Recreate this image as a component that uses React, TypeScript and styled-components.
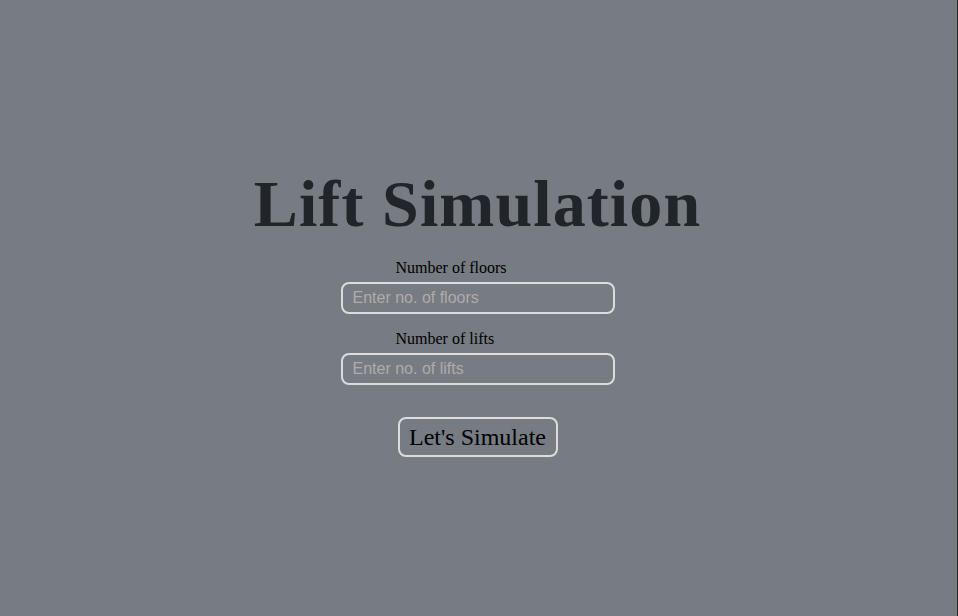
import React from "react";
import styled, { createGlobalStyle } from "styled-components";

const Global = createGlobalStyle`
  html, body { margin: 0; padding: 0; }
  body { background: #777b82; font-family: "Liberation Serif", "Times New Roman", serif; }
`;

const Page = styled.main`
  box-sizing: border-box;
  height: 616px;
  width: 958px;
  border-right: 1px solid #2a2c30;
  padding: 164px 2px 0 0;
  display: flex;
  flex-direction: column;
  align-items: center;
`;

const Title = styled.h1`
  margin: 0 0 14px;
  font-family: "Liberation Serif", "Times New Roman", serif;
  font-size: 66px;
  line-height: 80px;
  font-weight: 700;
  letter-spacing: 1.1px;
  color: #212529;
`;

const Form = styled.form`
  display: flex;
  flex-direction: column;
  align-items: center;
`;

const Field = styled.div`
  width: 274px;
  display: flex;
  flex-direction: column;
  margin-bottom: 15px;
`;

const Label = styled.label`
  padding-left: 55px;
  font-size: 16px;
  line-height: 19px;
  color: #000;
  margin-bottom: 5px;
`;

const Input = styled.input`
  box-sizing: border-box;
  width: 274px;
  height: 32px;
  border: 2px solid #dcdcdc;
  border-radius: 8px;
  background: transparent;
  padding: 0 10px;
  font-family: "Liberation Sans", Arial, sans-serif;
  font-size: 16px;
  color: #000;
  outline: none;
  &::placeholder { color: #b0abab; }
`;

const Button = styled.button`
  box-sizing: border-box;
  margin-top: 17px;
  width: 160px;
  height: 40px;
  padding: 0;
  border: 2px solid #dcdcdc;
  border-radius: 8px;
  background: transparent;
  font-family: "Liberation Serif", "Times New Roman", serif;
  font-size: 24px;
  color: #000;
  cursor: pointer;
`;

export default function App() {
  return (
    <>
      <Global />
      <Page>
        <Title>Lift Simulation</Title>
        <Form onSubmit={(e) => e.preventDefault()}>
          <Field>
            <Label htmlFor="floors">Number of floors</Label>
            <Input id="floors" type="number" placeholder="Enter no. of floors" />
          </Field>
          <Field>
            <Label htmlFor="lifts">Number of lifts</Label>
            <Input id="lifts" type="number" placeholder="Enter no. of lifts" />
          </Field>
          <Button type="submit">Let's Simulate</Button>
        </Form>
      </Page>
    </>
  );
}
